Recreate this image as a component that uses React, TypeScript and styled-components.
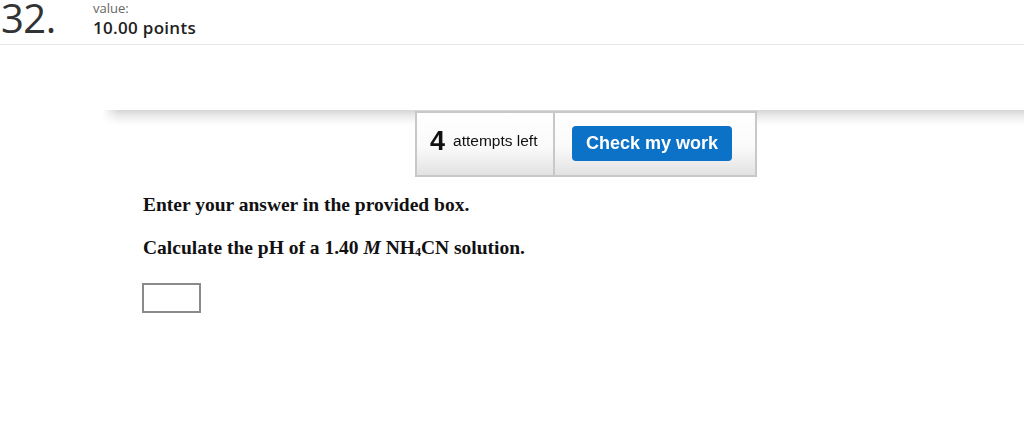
import React from 'react';
import styled, { createGlobalStyle } from 'styled-components';

const GlobalStyle = createGlobalStyle`
  html, body {
    margin: 0;
    padding: 0;
    background: #fff;
  }
`;

export default function App() {
  return (
    <>
      <GlobalStyle />
      <Page>
        <Header>
          <QuestionNumber>32.</QuestionNumber>
          <ValueBlock>
            <ValueLabel>value:</ValueLabel>
            <Points>10.00 points</Points>
          </ValueBlock>
        </Header>
        <Content>
          <ToolbarRow>
            <Toolbar>
              <AttemptsBox>
                <AttemptsCount>4</AttemptsCount>
                <AttemptsLabel>attempts left</AttemptsLabel>
              </AttemptsBox>
              <CheckBox>
                <CheckButton type="button">Check my work</CheckButton>
              </CheckBox>
            </Toolbar>
          </ToolbarRow>
          <Question>
            <Prompt>Enter your answer in the provided box.</Prompt>
            <Prompt>
              Calculate the pH of a 1.40 <i>M</i> NH<sub>4</sub>CN solution.
            </Prompt>
            <AnswerInput type="text" />
          </Question>
        </Content>
      </Page>
    </>
  );
}

const Page = styled.div`
  width: 1024px;
  height: 448px;
  overflow: hidden;
`;

const Header = styled.div`
  display: flex;
  align-items: flex-start;
  height: 45px;
  border-bottom: 1px solid #e6e6e6;
  box-sizing: border-box;
`;

const QuestionNumber = styled.div`
  font-family: 'Open Sans', 'Liberation Sans', sans-serif;
  font-weight: 400;
  font-size: 40px;
  line-height: 36px;
  color: #333;
  width: 93px;
  padding-left: 1px;
  box-sizing: border-box;
  letter-spacing: -0.5px;
`;

const ValueBlock = styled.div`
  display: flex;
  flex-direction: column;
`;

const ValueLabel = styled.div`
  font-family: 'Open Sans', 'Liberation Sans', sans-serif;
  font-size: 13px;
  line-height: 17px;
  color: #666;
`;

const Points = styled.div`
  font-family: 'Open Sans', 'Liberation Sans', sans-serif;
  font-weight: 600;
  font-size: 17px;
  line-height: 22px;
  letter-spacing: 0.3px;
  color: #222;
`;

const Content = styled.div`
  padding-top: 64px;
`;

const ToolbarRow = styled.div`
  display: flex;
  justify-content: flex-start;
  padding-left: 102px;
  background: linear-gradient(to bottom, #d6d6d6 0px, #ebebeb 6px, #fafafa 12px, #fff 16px, #fff 100%);
  background-repeat: no-repeat;
  background-size: 100% 18px;
  background-position: 0 1px;
  mask-image: linear-gradient(to right, transparent 102px, #000 118px);
  -webkit-mask-image: linear-gradient(to right, transparent 102px, #000 118px);
`;

const Toolbar = styled.div`
  display: flex;
  margin-left: 313px;
  margin-top: 2px;
`;

const Panel = styled.div`
  display: flex;
  align-items: center;
  height: 66px;
  box-sizing: border-box;
  border: 2px solid #c8c8c8;
  background: linear-gradient(to bottom, #fff 0%, #fafafa 55%, #e2e2e2 100%);
`;

const AttemptsBox = styled(Panel)`
  width: 140px;
  padding-left: 13px;
  padding-bottom: 6px;
`;

const AttemptsCount = styled.span`
  font-family: 'Liberation Sans', Arial, sans-serif;
  font-weight: 700;
  font-size: 27px;
  color: #111;
  margin-right: 8px;
`;

const AttemptsLabel = styled.span`
  font-family: 'Liberation Sans', Arial, sans-serif;
  font-size: 15.5px;
  color: #111;
`;

const CheckBox = styled(Panel)`
  width: 202px;
  border-left: none;
  padding-left: 17px;
  padding-bottom: 2px;
`;

const CheckButton = styled.button`
  width: 160px;
  height: 35px;
  border: none;
  border-radius: 4px;
  background: #0b72c7;
  color: #fff;
  font-family: 'Liberation Sans', Arial, sans-serif;
  font-weight: 700;
  font-size: 18px;
  cursor: pointer;
`;

const Question = styled.div`
  padding-left: 143px;
  padding-top: 17px;
  display: flex;
  flex-direction: column;
  align-items: flex-start;
`;

const Prompt = styled.p`
  margin: 0 0 21px;
  font-family: 'Liberation Serif', 'Times New Roman', serif;
  font-weight: 700;
  font-size: 19.5px;
  line-height: 22px;
  color: #111;

  sub {
    font-size: 12px;
    vertical-align: -2px;
    line-height: 0;
  }
`;

const AnswerInput = styled.input`
  margin-top: 3px;
  margin-left: -1px;
  width: 59px;
  height: 30px;
  box-sizing: border-box;
  border: 2px solid #8a8a8a;
  background: #fff;
`;
